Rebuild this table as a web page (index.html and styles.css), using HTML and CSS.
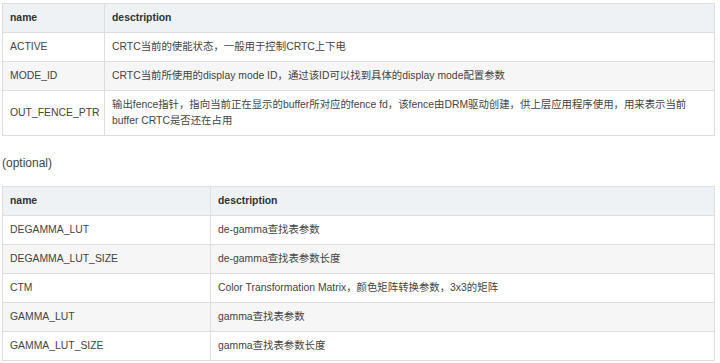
FILE: index.html
```html
<!DOCTYPE html>
<html lang="zh-CN">
<head>
<meta charset="utf-8">
<title>CRTC properties</title>
<link rel="stylesheet" href="styles.css">
</head>
<body>
<div class="page">
  <table class="prop-table">
    <colgroup><col class="c-name-1"><col></colgroup>
    <thead>
      <tr><th>name</th><th>desctription</th></tr>
    </thead>
    <tbody>
      <tr><td>ACTIVE</td><td>CRTC当前的使能状态，一般用于控制CRTC上下电</td></tr>
      <tr><td>MODE_ID</td><td>CRTC当前所使用的display mode ID，通过该ID可以找到具体的display mode配置参数</td></tr>
      <tr><td>OUT_FENCE_PTR</td><td>输出fence指针，指向当前正在显示的buffer所对应的fence fd，该fence由DRM驱动创建，供上层应用程序使用，用来表示当前buffer CRTC是否还在占用</td></tr>
    </tbody>
  </table>

  <p class="note">(optional)</p>

  <table class="prop-table">
    <colgroup><col class="c-name-2"><col></colgroup>
    <thead>
      <tr><th>name</th><th>desctription</th></tr>
    </thead>
    <tbody>
      <tr><td>DEGAMMA_LUT</td><td>de-gamma查找表参数</td></tr>
      <tr><td>DEGAMMA_LUT_SIZE</td><td>de-gamma查找表参数长度</td></tr>
      <tr><td>CTM</td><td>Color Transformation Matrix，颜色矩阵转换参数，3x3的矩阵</td></tr>
      <tr><td>GAMMA_LUT</td><td>gamma查找表参数</td></tr>
      <tr><td>GAMMA_LUT_SIZE</td><td>gamma查找表参数长度</td></tr>
    </tbody>
  </table>
</div>
</body>
</html>
```

FILE: styles.css
```css
html, body {
  margin: 0;
  padding: 0;
  background: #ffffff;
}

body {
  font-family: "Liberation Sans", Arial, "Noto Sans CJK SC", sans-serif;
  font-size: 12px;
  color: #444444;
}

.page {
  padding: 3px 5px 0 2px;
}

.prop-table {
  width: 713px;
  border-collapse: collapse;
  table-layout: fixed;
  font-size: 10.4px;
}

.c-name-1 {
  width: 102px;
}

.c-name-2 {
  width: 208px;
}

.prop-table th,
.prop-table td {
  border: 1px solid #dedede;
  padding: 6px 6px 6px 7px;
  line-height: 16px;
  text-align: left;
  vertical-align: middle;
}

.prop-table th {
  background: #eff2f5;
  font-weight: bold;
  color: #333333;
}

.prop-table tbody tr:nth-child(even) td {
  background: #f6f6f6;
}

.note {
  margin: 19px 0 14px;
  line-height: 17px;
  color: #444444;
}
```
